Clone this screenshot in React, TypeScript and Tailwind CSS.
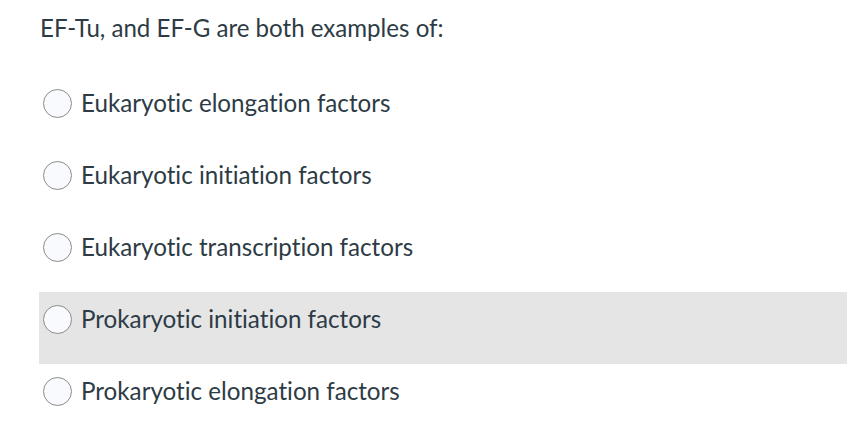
import React from 'react';

const options = [
  'Eukaryotic elongation factors',
  'Eukaryotic initiation factors',
  'Eukaryotic transcription factors',
  'Prokaryotic initiation factors',
  'Prokaryotic elongation factors',
];

export default function App() {
  const hovered = 3;
  return (
    <div className="w-[847px] h-[427px] bg-white overflow-hidden text-[#2d3b45] font-['Lato',sans-serif] [font-variant-ligatures:none]">
      <div className="pl-[40px] pt-[13px] text-[24.1px] leading-[30px]">EF-Tu, and EF-G are both examples of:</div>
      <div className="mt-[33px] ml-[39px]">
        {options.map((opt, i) => (
          <div
            key={opt}
            className={`h-[72px] pt-[13px] pl-[4px] flex items-start ${i === hovered ? 'bg-[#e5e5e5]' : ''}`}
          >
            <span className="w-[29px] h-[29px] rounded-full border border-[#8a8a8a] bg-[#f9fafd] shrink-0" />
            <span className="ml-[9px] text-[24.2px] leading-[27px]">{opt}</span>
          </div>
        ))}
      </div>
    </div>
  );
}
